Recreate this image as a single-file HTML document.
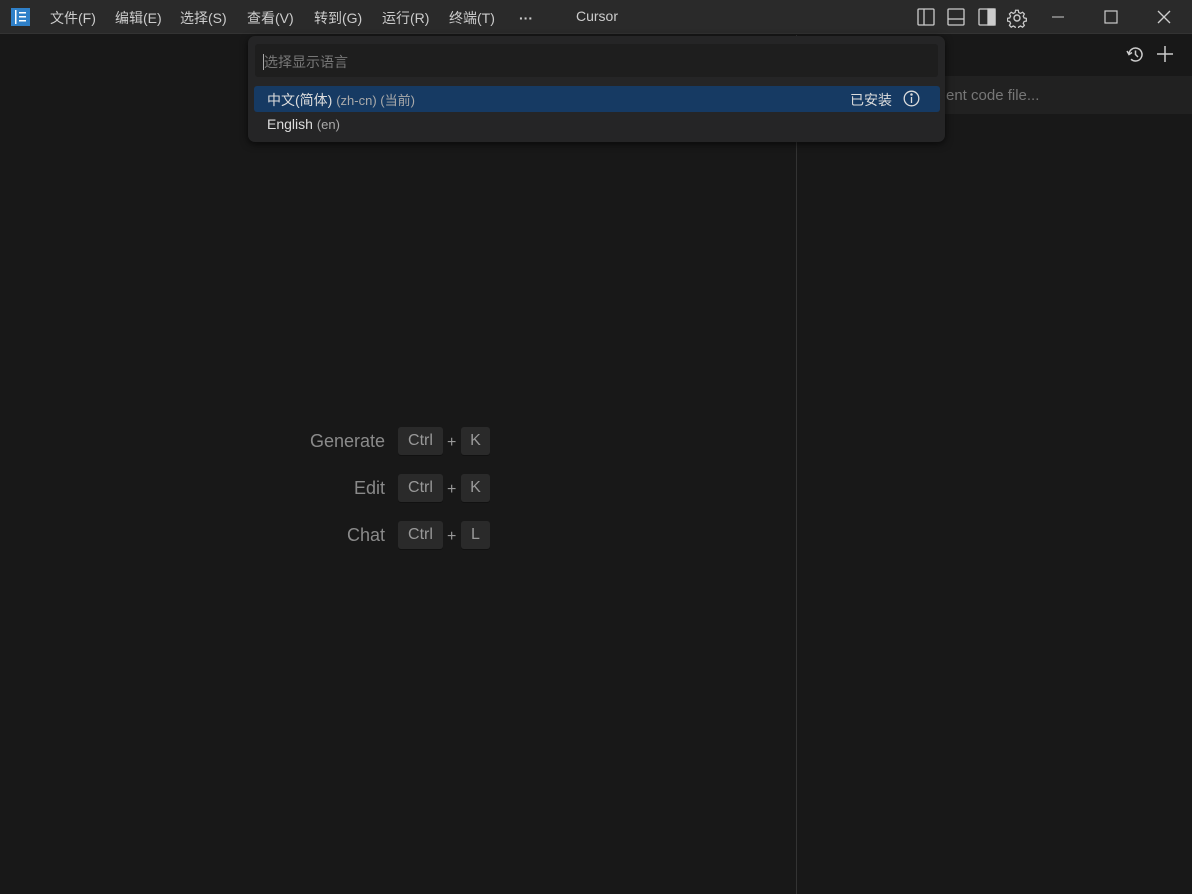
<!DOCTYPE html><html><head><meta charset="utf-8"><style>
*{margin:0;padding:0;box-sizing:border-box}
body{width:1192px;height:894px;background:#181818;font-family:"Liberation Sans","Noto Sans CJK SC",sans-serif;color:#ccc;position:relative;overflow:hidden}
.tb{position:absolute;left:0;top:0;width:1192px;height:34px;background:#2a2a2a;border-bottom:1px solid #333}
.m{position:absolute;top:8px;font-size:14px;color:#ccc}
.ic{position:absolute;top:8px}
.dlg{position:absolute;left:248px;top:36px;width:697px;height:106px;background:#252526;border-radius:7px;box-shadow:0 2px 8px #000a}
.inp{position:absolute;left:7px;top:8px;width:683px;height:33px;background:#1e1e1e;border-radius:3px;font-size:14px;color:#777;padding:8px 0 0 8px;border-left:0}
.sel{position:absolute;left:6px;top:50px;width:686px;height:26px;background:#163a63;border-radius:3px}
.t{position:absolute;font-size:14px;color:#ddd}
.s{font-size:13px;color:#aaa}
.sc{position:absolute;font-size:18px;color:#8a8a8a;text-align:right;width:100px}
.k{position:absolute;height:28px;background:#2a2a2a;border-radius:3px;font-size:16px;color:#999;text-align:center;line-height:28px;box-shadow:0 1px 0 #111}
</style></head><body>
<div class="tb">
<svg class="ic" style="left:11px;top:8px" width="19" height="18"><rect width="19" height="18" fill="#2f80c8"/><rect x="4" y="2" width="1.5" height="14" fill="#fff"/><rect x="8" y="4" width="7" height="1.5" fill="#fff"/><rect x="8" y="8" width="7" height="1.5" fill="#fff"/><rect x="8" y="12" width="7" height="1.5" fill="#fff"/></svg>
<span class="m" style="left:50px">文件(F)</span><span class="m" style="left:115px">编辑(E)</span><span class="m" style="left:180px">选择(S)</span><span class="m" style="left:247px">查看(V)</span><span class="m" style="left:314px">转到(G)</span><span class="m" style="left:382px">运行(R)</span><span class="m" style="left:449px">终端(T)</span><span class="m" style="left:519px;top:10px;font-weight:bold">···</span><span class="m" style="left:576px">Cursor</span>
<svg class="ic" style="left:917px" width="18" height="18" fill="none" stroke="#ccc" stroke-width="1.3"><rect x="1" y="1" width="16" height="16" rx="1"/><line x1="7" y1="1" x2="7" y2="17"/></svg>
<svg class="ic" style="left:947px" width="18" height="18" fill="none" stroke="#ccc" stroke-width="1.3"><rect x="1" y="1" width="16" height="16" rx="1"/><line x1="1" y1="11" x2="17" y2="11"/></svg>
<svg class="ic" style="left:978px" width="18" height="18" fill="none" stroke="#ccc" stroke-width="1.3"><rect x="1" y="1" width="16" height="16" rx="1"/><rect x="10" y="1" width="7" height="16" fill="#ccc"/></svg>
<svg class="ic" style="left:1007px" width="20" height="20" fill="none" stroke="#ccc" stroke-width="1.4"><circle cx="10" cy="10" r="3"/><path d="M8.5 1.5h3l.5 2.5 2 1 2.3-1.3 2 2-1.3 2.3 1 2 2.5.5v3l-2.5.5-1 2 1.3 2.3-2 2-2.3-1.3-2 1-.5 2.5h-3l-.5-2.5-2-1-2.3 1.3-2-2 1.3-2.3-1-2-2.5-.5v-3l2.5-.5 1-2-1.3-2.3 2-2 2.3 1.3 2-1z" transform="scale(.9) translate(1 1)"/></svg>
<svg class="ic" style="left:1051px" width="14" height="18" stroke="#ccc"><line x1="1" y1="9" x2="13" y2="9"/></svg>
<svg class="ic" style="left:1104px" width="14" height="18" fill="none" stroke="#ccc" stroke-width="1.2"><rect x="1" y="3" width="12" height="12"/></svg>
<svg class="ic" style="left:1157px" width="14" height="18" stroke="#ccc" stroke-width="1.3"><line x1="1" y1="3" x2="13" y2="15"/><line x1="13" y1="3" x2="1" y2="15"/></svg>
</div>
<div style="position:absolute;left:796px;top:35px;width:1px;height:859px;background:#333"></div>
<div style="position:absolute;left:797px;top:76px;width:395px;height:38px;background:#212121"></div>
<span class="t" style="left:946px;top:87px;color:#777;font-size:15px">ent code file...</span>
<svg style="position:absolute;left:1126px;top:45px" width="19" height="19" fill="none" stroke="#ccc" stroke-width="1.5"><path d="M3 9.5a6.5 6.5 0 1 1 2 4.7"/><path d="M1 6l2 3.5 3-2"/><path d="M9.5 5.5v4l2.5 2.5"/></svg>
<svg style="position:absolute;left:1156px;top:45px" width="18" height="18" stroke="#ccc" stroke-width="1.5"><line x1="9" y1="1" x2="9" y2="17"/><line x1="1" y1="9" x2="17" y2="9"/></svg>
<div class="dlg">
<div class="inp"><span style="border-left:1px solid #aaa;padding-left:0">选择显示语言</span></div>
<div class="sel"></div>
<span class="t" style="left:19px;top:54px">中文(简体) <span class="s">(zh-cn) (当前)</span></span>
<span class="t" style="left:602px;top:54px">已安装</span>
<svg style="position:absolute;left:655px;top:54px" width="17" height="17" fill="none" stroke="#ddd" stroke-width="1.3"><circle cx="8.5" cy="8.5" r="7.3"/><line x1="8.5" y1="7" x2="8.5" y2="13"/><circle cx="8.5" cy="4.5" r=".6" fill="#ddd"/></svg>
<span class="t" style="left:19px;top:80px">English <span class="s">(en)</span></span>
</div>
<div class="sc" style="left:285px;top:431px">Generate</div>
<div class="sc" style="left:285px;top:478px">Edit</div>
<div class="sc" style="left:285px;top:525px">Chat</div>
<div class="k" style="left:398px;top:427px;width:45px">Ctrl</div><span class="t" style="left:447px;top:434px;color:#999;font-size:16px">+</span><div class="k" style="left:461px;top:427px;width:29px">K</div>
<div class="k" style="left:398px;top:474px;width:45px">Ctrl</div><span class="t" style="left:447px;top:481px;color:#999;font-size:16px">+</span><div class="k" style="left:461px;top:474px;width:29px">K</div>
<div class="k" style="left:398px;top:521px;width:45px">Ctrl</div><span class="t" style="left:447px;top:528px;color:#999;font-size:16px">+</span><div class="k" style="left:461px;top:521px;width:29px">L</div>
</body></html>
